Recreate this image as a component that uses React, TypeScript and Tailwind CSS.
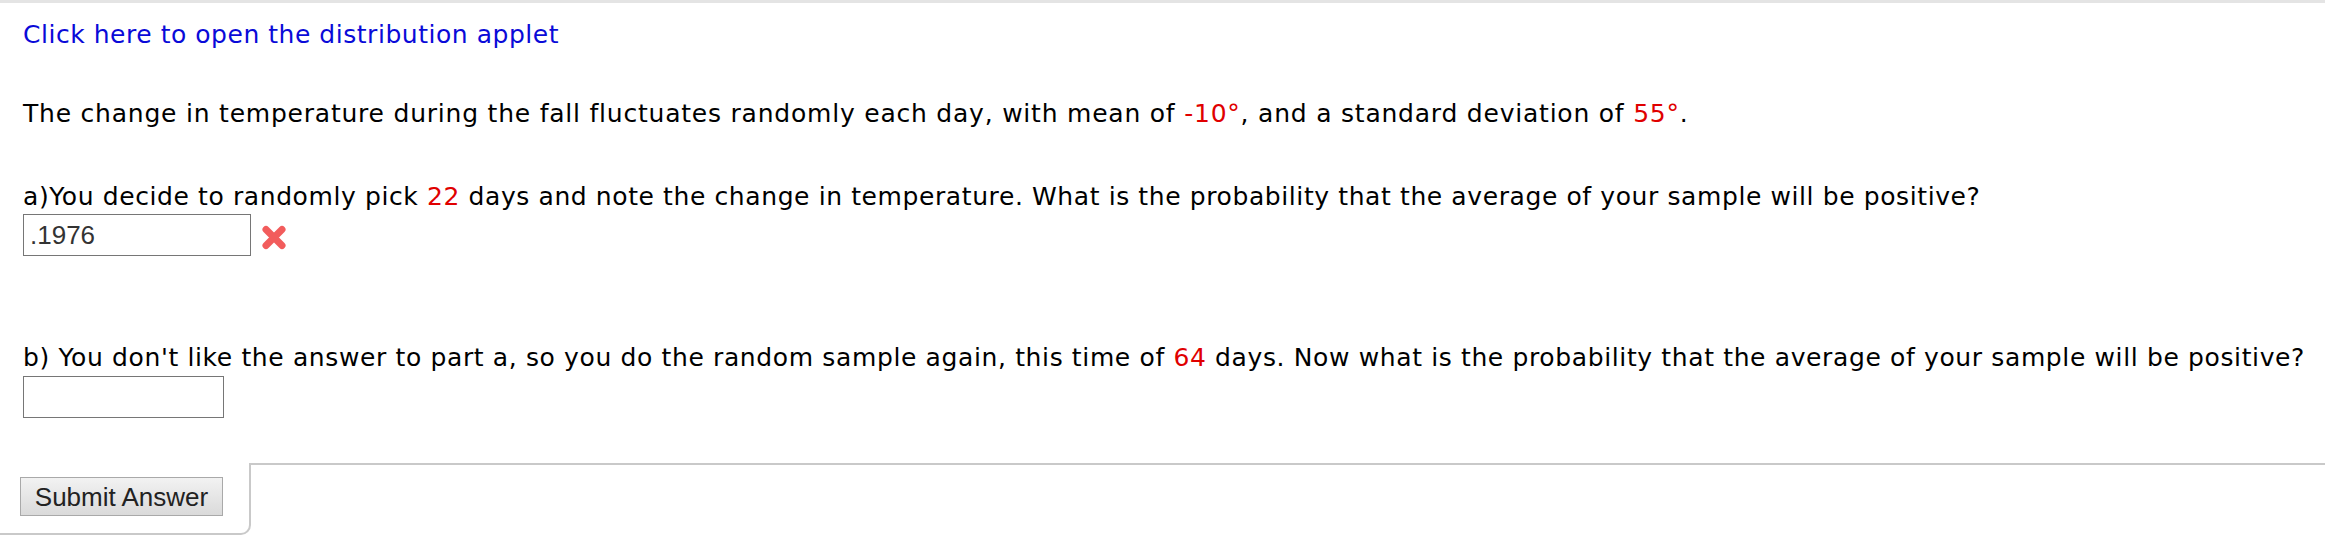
const body = 'text-[25px] leading-[28px] font-["DejaVu_Sans",Verdana,sans-serif]'

function WrongMark() {
  return (
    <svg width="26" height="25" viewBox="0 0 26 25" className="shrink-0">
      <path
        d="M5 4.5 L21 20.5 M21 4.5 L5 20.5"
        stroke="#f25c5c"
        strokeWidth="7"
        strokeLinecap="round"
      />
    </svg>
  )
}

export default function App() {
  return (
    <div className="w-[2325px] h-[536px] bg-white flex flex-col text-black overflow-hidden">
      <div className="h-[3px] bg-[#e4e4e4]" />

      <div className="pl-[23px]">
        <a href="#" className={`block mt-[18px] text-[#0a0ad8] tracking-[0.53px] ${body}`}>
          Click here to open the distribution applet
        </a>

        <p className={`mt-[51px] tracking-[0.78px] ${body}`}>
          The change in temperature during the fall fluctuates randomly each day, with mean of{' '}
          <span className="text-[#e00000]">-10°</span>, and a standard deviation of{' '}
          <span className="text-[#e00000]">55°</span>.
        </p>

        <p className={`mt-[55px] tracking-[0.6px] ${body}`}>
          a)You decide to randomly pick <span className="text-[#e00000]">22</span> days and note the
          change in temperature. What is the probability that the average of your sample will be
          positive?
        </p>
        <div className="mt-[3px] flex items-start gap-[10px]">
          <input
            type="text"
            defaultValue=".1976"
            className="w-[228px] h-[42px] border border-[#767676] px-[6px] text-[26px] text-[#333] font-['Liberation_Sans',Arial,sans-serif] outline-none"
          />
          <div className="mt-[11px]">
            <WrongMark />
          </div>
        </div>

        <p className={`mt-[88px] tracking-[0.63px] ${body}`}>
          b) You don't like the answer to part a, so you do the random sample again, this time of{' '}
          <span className="text-[#e00000]">64</span> days. Now what is the probability that the
          average of your sample will be positive?
        </p>
        <input
          type="text"
          className="mt-[4px] block w-[201px] h-[42px] border border-[#767676] px-[6px] text-[26px] font-['Liberation_Sans',Arial,sans-serif] outline-none"
        />
      </div>

      <div className="mt-[45px] flex h-[72px]">
        <div className="w-[251px] shrink-0 border-r-2 border-b-2 border-[#c9c9c9] rounded-br-[10px] pl-[20px] pt-[14px]">
          <button className="w-[203px] h-[39px] border border-[#a9a9a9] bg-linear-to-b from-[#f2f2f2] to-[#dadada] text-[26px] leading-none text-[#222] font-['Liberation_Sans',Arial,sans-serif]">
            Submit Answer
          </button>
        </div>
        <div className="flex-1 border-t-2 border-[#c9c9c9]" />
      </div>
    </div>
  )
}
